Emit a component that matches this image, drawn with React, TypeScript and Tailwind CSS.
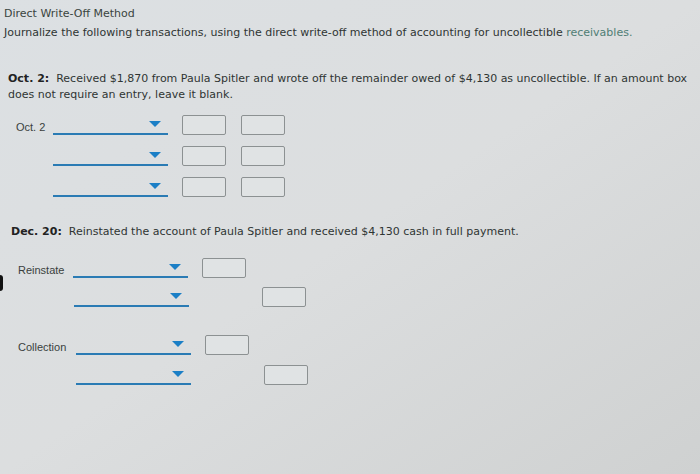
import React from "react";

const body = { fontFamily: '"DejaVu Sans", Verdana, sans-serif' };
const label = { fontFamily: '"Liberation Sans", Arial, sans-serif' };

function Dropdown() {
  return (
    <div className="w-[115px] h-[20px] border-b-2 border-[#2a7bb4] flex justify-end items-start pt-[6px] pr-[7px]">
      <div className="w-0 h-0 border-l-[6px] border-r-[6px] border-t-[6px] border-l-transparent border-r-transparent border-t-[#1b7fc6]" />
    </div>
  );
}

function Box() {
  return <div className="w-[44px] h-[20px] border-[1.5px] border-[#8c9192] rounded-[2px] bg-[#e0e3e4]" />;
}

function Spacer() {
  return <div className="w-[44px] h-[20px]" />;
}

function Row({ text, lw, debit }: { text?: string; lw: string; debit: boolean }) {
  return (
    <div className="flex items-end h-[20px]">
      <div className={`${lw} text-[11px] text-[#3a3f3e] leading-[14px] pb-[1px]`} style={label}>
        {text}
      </div>
      <Dropdown />
      <div className="ml-[14px] flex gap-[15px]">
        {debit ? <Box /> : <Spacer />}
        {debit ? <Spacer /> : <Box />}
      </div>
    </div>
  );
}

export default function App() {
  return (
    <div
      className="w-[700px] h-[474px] overflow-hidden bg-gradient-to-br from-[#dce0e3] via-[#dcdedf] to-[#cfd1d1] text-[#2f3533] relative"
      style={body}
    >
      <div className="absolute left-0 top-[275px] w-[3px] h-[16px] bg-[#111] rounded-r" />
      <div className="pl-[4px] pt-[6px] text-[11px] leading-[16px] text-[#3a4440]">Direct Write-Off Method</div>
      <div className="pl-[4px] mt-[3px] text-[11px] leading-[16px]">
        Journalize the following transactions, using the direct write-off method of accounting for uncollectible{" "}
        <span className="text-[#4f7d74]">receivables.</span>
      </div>
      <div className="pl-[8px] mt-[30px] text-[11px] leading-[16px] w-[700px]">
        <span className="font-bold text-[#222]">Oct. 2:</span>&nbsp; Received $1,870 from Paula Spitler and wrote off the
        remainder owed of $4,130 as uncollectible. If an amount box does not require an entry, leave it blank.
      </div>
      <div className="ml-[16px] mt-[12px] flex flex-col gap-[11px]">
        {[0, 1, 2].map((i) => (
          <div key={i} className="flex items-end h-[20px]">
            <div className="w-[37px] text-[11px] text-[#3a3f3e] leading-[14px] pb-[1px]" style={label}>
              {i === 0 ? "Oct. 2" : ""}
            </div>
            <Dropdown />
            <div className="ml-[14px] flex gap-[15px]">
              <Box />
              <Box />
            </div>
          </div>
        ))}
      </div>
      <div className="pl-[11px] mt-[27px] text-[11px] leading-[16px]">
        <span className="font-bold text-[#222]">Dec. 20:</span>&nbsp; Reinstated the account of Paula Spitler and received
        $4,130 cash in full payment.
      </div>
      <div className="ml-[18px] mt-[18px] flex flex-col">
        <Row text="Reinstate" lw="w-[55px]" debit />
        <div className="mt-[9px]">
          <Row lw="w-[56px]" debit={false} />
        </div>
        <div className="mt-[28px]">
          <Row text="Collection" lw="w-[58px]" debit />
        </div>
        <div className="mt-[10px]">
          <Row lw="w-[58px]" debit={false} />
        </div>
      </div>
    </div>
  );
}
